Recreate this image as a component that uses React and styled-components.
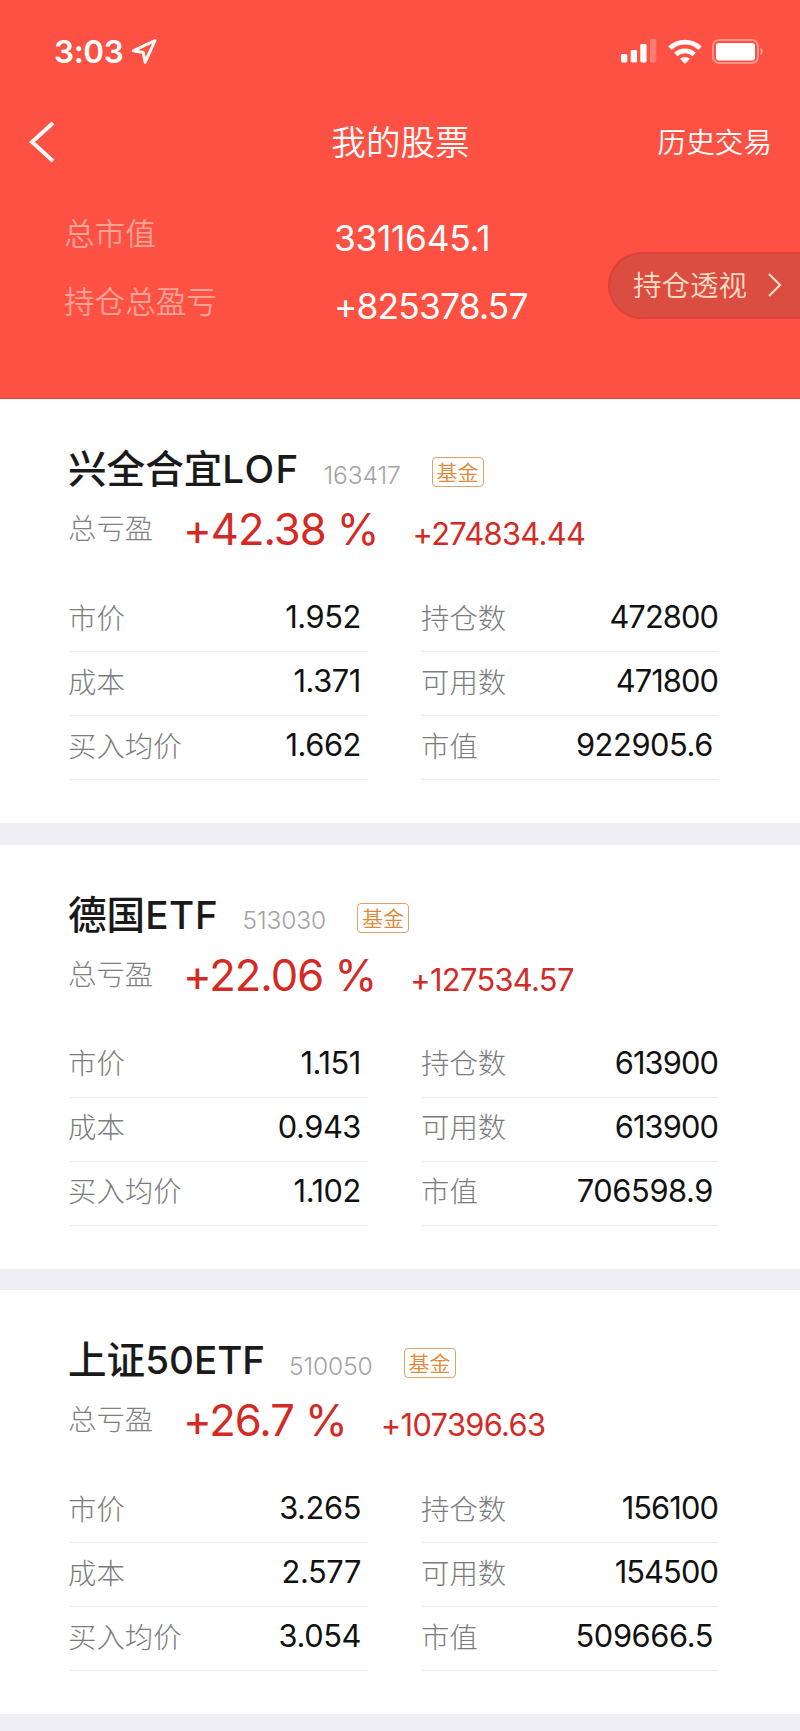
import styled, { createGlobalStyle } from 'styled-components';

const GlobalStyle = createGlobalStyle`
  body {
    margin: 0;
    background: #fff;
  }
  * {
    box-sizing: border-box;
  }
`;

const Page = styled.div`
  width: 800px;
  height: 1731px;
  overflow: hidden;
  background: #efeef4;
  color: #111;
  font-family: Inter, 'Noto Sans CJK SC', sans-serif;
  white-space: nowrap;
`;

const Header = styled.header`
  height: 399px;
  background: #fc5143;
  border-bottom: 1px solid #d9473d;
  color: #fff;
`;

const StatusBar = styled.div`
  display: flex;
  align-items: center;
  height: 102px;
  padding: 0 36px 0 54px;
`;

const Clock = styled.span`
  font-size: 31.5px;
  font-weight: 600;
  letter-spacing: -0.4px;
  margin-right: 8px;
`;

const StatusIcons = styled.div`
  display: flex;
  align-items: center;
  gap: 10.5px;
  margin-left: auto;
`;

const NavBar = styled.div`
  display: grid;
  grid-template-columns: 1fr auto 1fr;
  align-items: center;
  height: 80px;
  padding: 0 28px 0 29px;
`;

const NavTitle = styled.h1`
  margin: 0;
  padding-bottom: 4px;
  font-size: 34.6px;
  font-weight: 350;
`;

const HistoryLink = styled.a`
  justify-self: end;
  padding-bottom: 4px;
  font-size: 28.6px;
  font-weight: 350;
`;

const Summary = styled.div`
  display: flex;
  align-items: center;
  justify-content: space-between;
  height: 206px;
  padding: 0 0 0 64px;
`;

const SummaryList = styled.div`
  display: grid;
  grid-template-columns: 270px auto;
  grid-auto-rows: 68px;
  align-items: center;
  margin-top: -33px;
`;

const SummaryLabel = styled.span`
  padding-bottom: 5px;
  font-size: 30.6px;
  font-weight: 350;
  color: #ffa297;
`;

const SummaryValue = styled.span`
  font-size: 35.3px;
  font-weight: 400;
  letter-spacing: ${(p) => p.$spacing}px;
  padding-top: 8px;
`;

const PerspectiveButton = styled.button`
  display: flex;
  align-items: center;
  gap: 20px;
  width: 192px;
  height: 67px;
  padding: 0 0 0 23px;
  border: 2px solid #d9433a;
  border-right: 0;
  border-radius: 34px 0 0 34px;
  background: #db4d41;
  color: #ffdcc4;
  font: inherit;
  font-size: 28.5px;
  font-weight: 350;
`;

const ButtonLabel = styled.span`
  padding-bottom: 4px;
`;

const Holding = styled.section`
  height: 424px;
  margin-bottom: 21.5px;
  padding: 46px 0 0 68px;
  background: #fff;
`;

const HoldingHead = styled.div`
  display: flex;
  align-items: center;
  height: 50px;
`;

const HoldingName = styled.h2`
  margin: 0;
  padding-bottom: 8px;
  font-size: 38.6px;
  font-weight: 500;
  color: #1a1a1a;
`;

const NameSuffix = styled.span`
  letter-spacing: ${(p) => p.$spacing}px;
`;

const HoldingCode = styled.span`
  margin: 9px 0 0 24px;
  font-size: 24.5px;
  font-weight: 300;
  color: #a3a3a3;
  letter-spacing: -0.1px;
`;

const Tag = styled.span`
  display: flex;
  align-items: center;
  justify-content: center;
  width: 52px;
  height: 30px;
  margin: 4px 0 0 31px;
  padding-top: 1px;
  border: 1.5px solid #dda468;
  border-radius: 4px;
  font-size: 21px;
  font-weight: 350;
  line-height: 1;
  color: #de8a3a;
`;

const ProfitRow = styled.div`
  display: flex;
  align-items: flex-start;
  height: 72px;
  color: #d42a26;
`;

const ProfitLabel = styled.span`
  width: 115px;
  font-size: 28.4px;
  font-weight: 300;
  line-height: 68px;
  color: #808080;
`;

const ProfitRate = styled.span`
  font-size: 43.5px;
  font-weight: 400;
  line-height: 69px;
  letter-spacing: -1px;
`;

const ProfitAmount = styled.span`
  margin-left: 34px;
  font-size: 30.8px;
  font-weight: 400;
  line-height: 77px;
  letter-spacing: -0.65px;
`;

const Details = styled.div`
  display: grid;
  grid-template-columns: 298px 297px;
  column-gap: 53px;
  grid-auto-rows: 64px;
  padding: 21px 0 0 2px;
`;

const DetailCell = styled.div`
  display: flex;
  align-items: center;
  justify-content: space-between;
  padding: 0 ${(p) => p.$end}px 4px 0;
  border-bottom: 1px solid #e9e9e9;
`;

const DetailLabel = styled.span`
  margin-left: ${(p) => (p.$outdent ? -2 : 0)}px;
  padding-bottom: 3px;
  font-size: 28.4px;
  font-weight: 300;
  color: #7c7c7c;
`;

const DetailValue = styled.span`
  padding-bottom: 2px;
  font-size: 30.8px;
  font-weight: 400;
  letter-spacing: ${(p) => (p.$integer ? -0.9 : -0.4)}px;
`;

const holdings = [
  {
    name: '兴全合宜',
    suffix: 'LOF',
    spacing: 1.4,
    code: '163417',
    rate: '+42.38 %',
    amount: '+274834.44',
    price: '1.952',
    cost: '1.371',
    average: '1.662',
    total: '472800',
    available: '471800',
    value: '922905.6',
  },
  {
    name: '德国',
    suffix: 'ETF',
    spacing: 0.7,
    code: '513030',
    rate: '+22.06 %',
    amount: '+127534.57',
    price: '1.151',
    cost: '0.943',
    average: '1.102',
    total: '613900',
    available: '613900',
    value: '706598.9',
  },
  {
    name: '上证',
    suffix: '50ETF',
    spacing: 0,
    code: '510050',
    rate: '+26.7 %',
    amount: '+107396.63',
    price: '3.265',
    cost: '2.577',
    average: '3.054',
    total: '156100',
    available: '154500',
    value: '509666.5',
  },
];

function LocationIcon() {
  return (
    <svg width="27" height="27" viewBox="0 0 27 27" fill="none" stroke="#fff" strokeWidth="3" strokeLinejoin="round">
      <path d="M24 2.5 2.2 12.8 12.2 14.4 14.2 24.2Z" />
    </svg>
  );
}

function SignalIcon() {
  return (
    <svg width="36" height="24" viewBox="0 0 36 24" fill="#fff">
      <rect x="0" y="15" width="6.3" height="8.5" rx="1.4" />
      <rect x="9.7" y="11" width="6.3" height="12.5" rx="1.4" />
      <rect x="19.3" y="5" width="6.3" height="18.5" rx="1.4" />
      <rect x="29" y="0" width="6.3" height="23.5" rx="1.4" opacity="0.25" />
    </svg>
  );
}

function WifiIcon() {
  return (
    <svg width="34" height="25" viewBox="0 0 34 25" fill="none" stroke="#fff" strokeWidth="4.8">
      <path d="M2 9.2a21.5 21.5 0 0 1 30 0" />
      <path d="M7.8 15.6a13.3 13.3 0 0 1 18.4 0" />
      <path d="M17 25l-5-5.2a7.6 7.6 0 0 1 10 0z" fill="#fff" stroke="none" />
    </svg>
  );
}

function BatteryIcon() {
  return (
    <svg width="52" height="25" viewBox="0 0 52 25" fill="#fff">
      <rect x="1" y="1" width="45" height="23" rx="6" fill="none" stroke="#fff" strokeWidth="2" opacity="0.38" />
      <rect x="4" y="4" width="39" height="17.5" rx="3" />
      <path d="M48.5 9c3 1 3 6 0 7z" opacity="0.45" />
    </svg>
  );
}

function DetailItem({ label, value, end = 0, outdent }) {
  return (
    <DetailCell $end={end}>
      <DetailLabel $outdent={outdent}>{label}</DetailLabel>
      <DetailValue $integer={!value.includes('.')}>{value}</DetailValue>
    </DetailCell>
  );
}

function HoldingCard({ item }) {
  return (
    <Holding>
      <HoldingHead>
        <HoldingName>
          {item.name}
          <NameSuffix $spacing={item.spacing}>{item.suffix}</NameSuffix>
        </HoldingName>
        <HoldingCode>{item.code}</HoldingCode>
        <Tag>基金</Tag>
      </HoldingHead>
      <ProfitRow>
        <ProfitLabel>总亏盈</ProfitLabel>
        <ProfitRate>{item.rate}</ProfitRate>
        <ProfitAmount>{item.amount}</ProfitAmount>
      </ProfitRow>
      <Details>
        <DetailItem label="市价" value={item.price} end={7} outdent />
        <DetailItem label="持仓数" value={item.total} />
        <DetailItem label="成本" value={item.cost} end={7} outdent />
        <DetailItem label="可用数" value={item.available} />
        <DetailItem label="买入均价" value={item.average} end={7} outdent />
        <DetailItem label="市值" value={item.value} end={5} />
      </Details>
    </Holding>
  );
}

function App() {
  return (
    <Page>
      <GlobalStyle />
      <Header>
        <StatusBar>
          <Clock>3:03</Clock>
          <LocationIcon />
          <StatusIcons>
            <SignalIcon />
            <WifiIcon />
            <BatteryIcon />
          </StatusIcons>
        </StatusBar>
        <NavBar>
          <svg width="26" height="42" viewBox="0 0 26 42" fill="none" stroke="#fff" strokeWidth="3.8">
            <path d="M24 2 3 21 24 40" />
          </svg>
          <NavTitle>我的股票</NavTitle>
          <HistoryLink>历史交易</HistoryLink>
        </NavBar>
        <Summary>
          <SummaryList>
            <SummaryLabel>总市值</SummaryLabel>
            <SummaryValue $spacing={-0.3}>3311645.1</SummaryValue>
            <SummaryLabel>持仓总盈亏</SummaryLabel>
            <SummaryValue $spacing={-0.8}>+825378.57</SummaryValue>
          </SummaryList>
          <PerspectiveButton>
            <ButtonLabel>持仓透视</ButtonLabel>
            <svg width="15" height="26" viewBox="0 0 15 26" fill="none" stroke="currentColor" strokeWidth="2.2">
              <path d="M2 2 13 13 2 24" />
            </svg>
          </PerspectiveButton>
        </Summary>
      </Header>
      {holdings.map((item) => (
        <HoldingCard key={item.code} item={item} />
      ))}
    </Page>
  );
}

export default App;
